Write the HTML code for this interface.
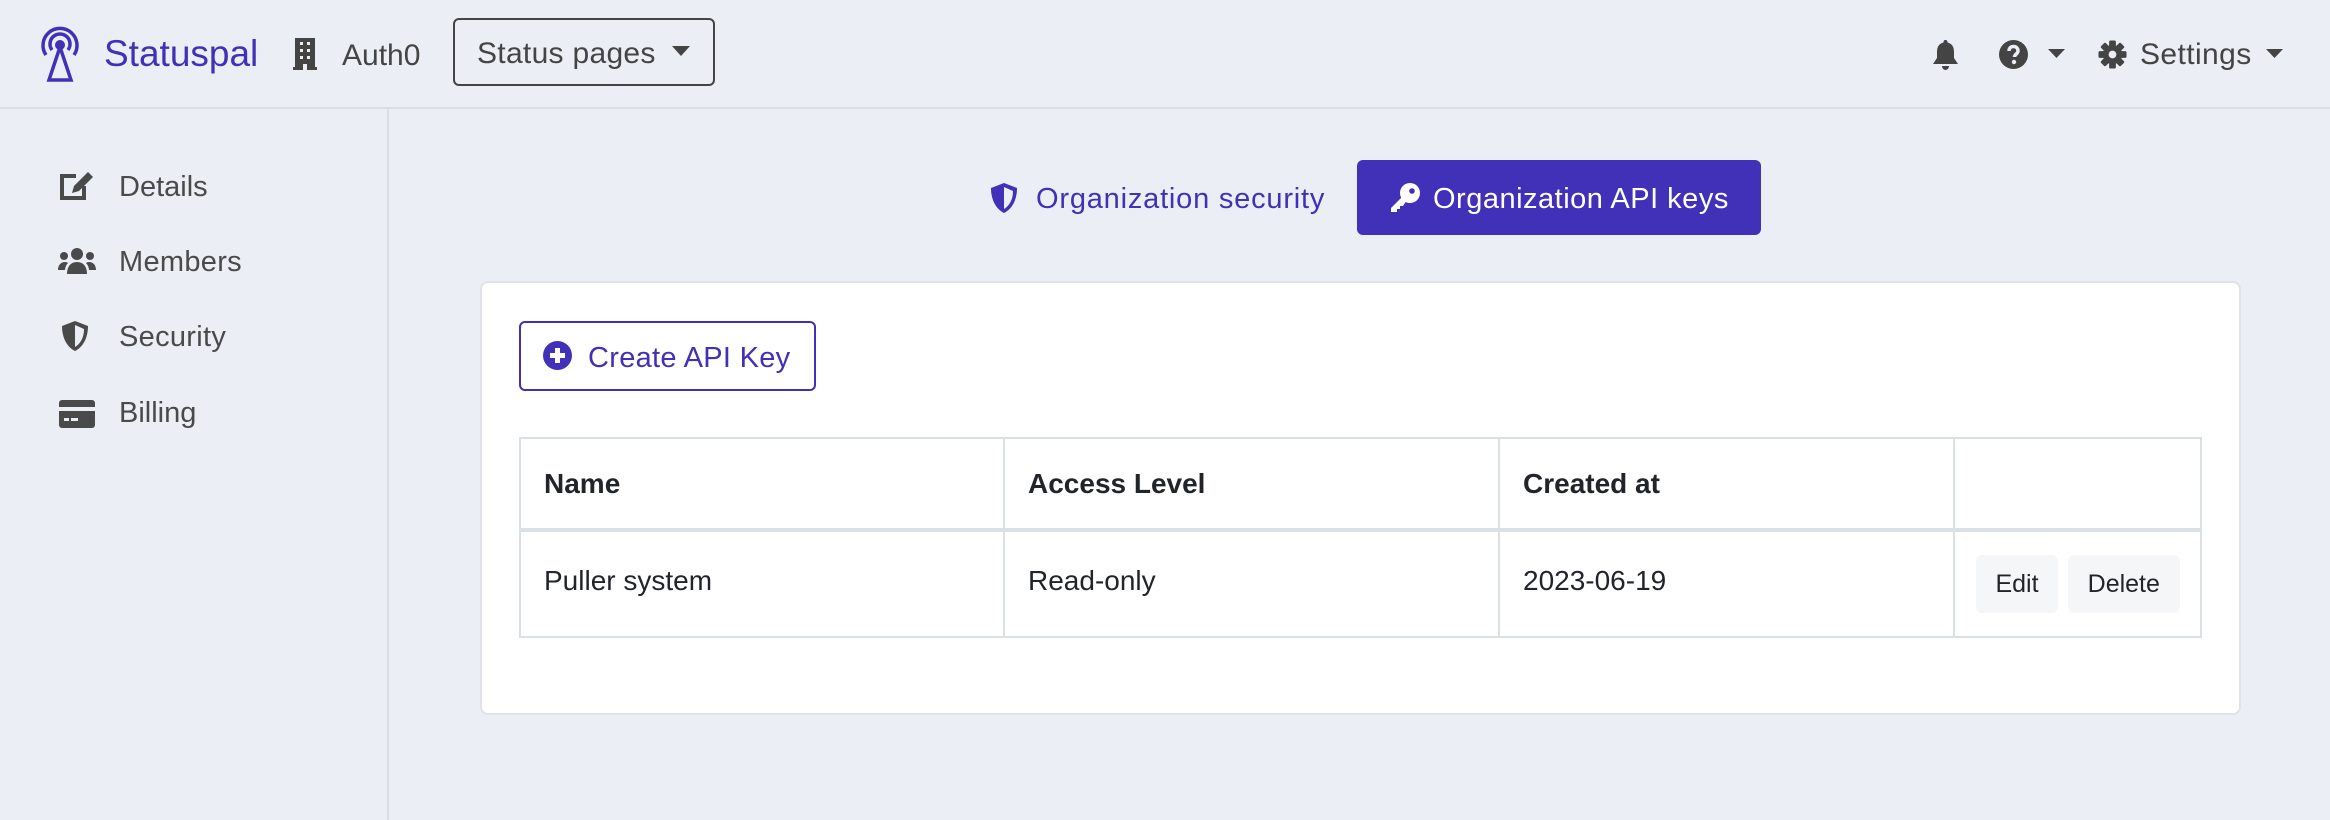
<!DOCTYPE html>
<html><head><meta charset="utf-8"><style>
*{box-sizing:border-box;margin:0;padding:0}
body{width:2330px;height:820px;background:#ebeef4;font-family:"Liberation Sans",sans-serif;position:relative;overflow:hidden;color:#212529}
.a{position:absolute}
.hdr{left:0;top:0;width:2330px;height:109px;border-bottom:2px solid #dadde2}
.nav{font-size:29px;color:#4a4a4a;line-height:1}
.card{left:480px;top:281px;width:1761px;height:434px;background:#fff;border:2px solid #dfe2e8;border-radius:8px}
table{position:absolute;left:519px;top:437px;width:1683px;border-collapse:collapse;font-size:28px}
td,th{border:2px solid #dbe0e5;text-align:left;padding:0 0 0 23px}
th{height:92px;border-bottom:4px solid #dbe0e5;font-weight:bold}
td{height:107px;padding-bottom:6px}
.btn{display:inline-block;background:#f5f6f8;border-radius:6px;font-size:25px;height:58px;line-height:58px;text-align:center}
</style></head><body>
<div class="a hdr"></div>
<svg class="a" style="left:37px;top:25px" width="46" height="58" viewBox="0 0 46 58"><g fill="none" stroke="#4130b8" stroke-width="3.5"><path d="M9 30A17 17 0 1 1 37 30"/><path d="M15 25A10 10 0 1 1 31 25"/><path d="M23 22L12 55H34L23 22"/></g><circle cx="23" cy="20" r="5" fill="#4130b8"/></svg>
<div class="a" style="left:104px;top:33px;font-size:37px;color:#4130b8">Statuspal</div>
<svg class="a" style="left:293px;top:38px" width="24" height="32" viewBox="0 0 24 32"><path d="M2 0H22V29H24V32H14V26H10V32H0V29H2Z" fill="#444"/><g fill="#ebeef4"><rect x="7" y="4" width="3" height="3"/><rect x="14" y="4" width="3" height="3"/><rect x="7" y="11" width="3" height="3"/><rect x="14" y="11" width="3" height="3"/><rect x="7" y="18" width="3" height="3"/><rect x="14" y="18" width="3" height="3"/></g></svg>
<div class="a" style="left:342px;top:39px;font-size:30px;color:#444">Auth0</div>
<div class="a" style="left:453px;top:18px;width:262px;height:68px;border:2px solid #444;border-radius:6px"></div>
<div class="a" style="left:477px;top:37px;font-size:30px;color:#444;letter-spacing:0.3px">Status pages</div>
<svg class="a" style="left:672px;top:46px" width="18" height="10"><path d="M0 0H18L9 10Z" fill="#444"/></svg>
<svg class="a" style="left:1932px;top:40px" width="27" height="30" viewBox="0 0 27 30"><path d="M13.5 0C15 0 15.5 1 15.5 2.5C20 3.5 22 7 22 12V18L26 24H1L5 18V12C5 7 7 3.5 11.5 2.5C11.5 1 12 0 13.5 0ZM10 26H17C17 28 15.5 30 13.5 30S10 28 10 26Z" fill="#444"/></svg>
<svg class="a" style="left:1999px;top:40px" width="29" height="29" viewBox="0 0 29 29"><circle cx="14.5" cy="14.5" r="14.5" fill="#444"/><path d="M10 11C10 8 12 6.5 14.5 6.5S19 8 19 11C19 14 15.5 14 15.5 17" fill="none" stroke="#ebeef4" stroke-width="3.5"/><circle cx="15" cy="22" r="2.2" fill="#ebeef4"/></svg>
<svg class="a" style="left:2048px;top:49px" width="17" height="9"><path d="M0 0H17L8.5 9Z" fill="#444"/></svg>
<svg class="a" style="left:2098px;top:40px" width="29" height="29" viewBox="-15 -15 30 30"><g fill="#444"><circle r="10"/><g id="t"><rect x="-3.5" y="-14.5" width="7" height="29" rx="1.5"/></g><use href="#t" transform="rotate(45)"/><use href="#t" transform="rotate(90)"/><use href="#t" transform="rotate(135)"/></g><circle r="4" fill="#ebeef4"/></svg>
<div class="a" style="left:2140px;top:38px;font-size:30px;color:#444;letter-spacing:0.4px">Settings</div>
<svg class="a" style="left:2266px;top:49px" width="17" height="9"><path d="M0 0H17L8.5 9Z" fill="#444"/></svg>

<div class="a" style="left:387px;top:109px;width:2px;height:711px;background:#dadde2"></div>
<svg class="a" style="left:59px;top:171px" width="36" height="30" viewBox="0 0 36 30"><path d="M17 5H3V27H25V15" fill="none" stroke="#4a4a4a" stroke-width="4"/><path d="M29 1L34 6L20 20L13 22L15 15Z" fill="#4a4a4a"/></svg>
<div class="a nav" style="left:119px;top:173px">Details</div>
<svg class="a" style="left:58px;top:248px" width="38" height="26" viewBox="0 0 38 26"><g fill="#4a4a4a"><circle cx="19" cy="6" r="6"/><circle cx="6" cy="8" r="4"/><circle cx="32" cy="8" r="4"/><path d="M9 26C9 18 13 14 19 14S29 18 29 26Z"/><path d="M0 22C0 17 3 14 7 14C9 14 10 15 10 15C8 17 7 20 7 22Z"/><path d="M38 22C38 17 35 14 31 14C29 14 28 15 28 15C30 17 31 20 31 22Z"/></g></svg>
<div class="a nav" style="left:119px;top:248px;letter-spacing:0.3px">Members</div>
<svg class="a" style="left:62px;top:321px" width="26" height="30" viewBox="0 0 26 30"><path d="M13 0L26 5C26 17 21 26 13 30C5 26 0 17 0 5Z" fill="#4a4a4a"/><path d="M13 4L22 8C22 17 18 23 13 26Z" fill="#ebeef4"/></svg>
<div class="a nav" style="left:119px;top:323px;letter-spacing:0.3px">Security</div>
<svg class="a" style="left:59px;top:400px" width="36" height="28" viewBox="0 0 36 28"><rect width="36" height="28" rx="3" fill="#4a4a4a"/><rect y="7" width="36" height="4" fill="#ebeef4"/><rect x="5" y="18" width="5" height="3" fill="#ebeef4"/><rect x="12" y="18" width="7" height="3" fill="#ebeef4"/></svg>
<div class="a nav" style="left:119px;top:399px">Billing</div>

<svg class="a" style="left:991px;top:183px" width="26" height="30" viewBox="0 0 26 30"><path d="M13 0L26 5C26 17 21 26 13 30C5 26 0 17 0 5Z" fill="#4130b8"/><path d="M13 4L22 8C22 17 18 23 13 26Z" fill="#ebeef4"/></svg>
<div class="a" style="left:1036px;top:183px;font-size:29px;color:#4130b8;letter-spacing:0.8px">Organization security</div>
<div class="a" style="left:1357px;top:160px;width:404px;height:75px;background:#4130b8;border-radius:6px"></div>
<svg class="a" style="left:1390px;top:183px" width="30" height="30" viewBox="0 0 30 30"><circle cx="20" cy="10" r="10" fill="#fff"/><path d="M13 13L1 25V29H7V26H10V23H13L17 17Z" fill="#fff"/><circle cx="22" cy="8" r="2.8" fill="#4130b8"/></svg>
<div class="a" style="left:1433px;top:183px;font-size:29px;color:#fff;letter-spacing:0.5px">Organization API keys</div>

<div class="a card"></div>
<div class="a" style="left:519px;top:321px;width:297px;height:70px;border:2px solid #4130b8;border-radius:6px"></div>
<svg class="a" style="left:543px;top:341px" width="29" height="29" viewBox="0 0 29 29"><circle cx="14.5" cy="14.5" r="14.5" fill="#4130b8"/><path d="M14.5 7V22M7 14.5H22" stroke="#fff" stroke-width="5"/></svg>
<div class="a" style="left:588px;top:342px;font-size:29px;color:#4130b8;letter-spacing:0.3px">Create API Key</div>
<table>
<tr><th style="width:484px">Name</th><th style="width:495px">Access Level</th><th style="width:455px">Created at</th><th></th></tr>
<tr><td>Puller system</td><td>Read-only</td><td>2023-06-19</td><td style="padding-left:21px;padding-bottom:0"><span class="btn" style="width:82px">Edit</span> <span class="btn" style="width:112px;margin-left:2px">Delete</span></td></tr>
</table>
</body></html>
